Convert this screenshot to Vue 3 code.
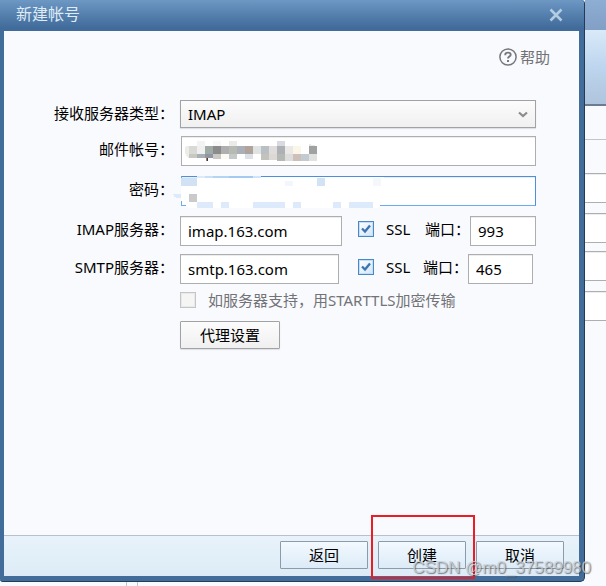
<script setup>
import { ref } from 'vue'

const protocol = ref('IMAP')
const startTls = ref(false)
const servers = ref([
  { id: 'imap', label: 'IMAP服务器：', host: 'imap.163.com', ssl: true, port: '993', compact: false },
  { id: 'smtp', label: 'SMTP服务器：', host: 'smtp.163.com', ssl: true, port: '465', compact: true },
])

// Redaction blocks: x, y, width, height, colour
const cell = 8
const upper = ['#d9dad5', '#f0f0f1', '#a0aba8', '#8c8b8c', '#b0afb0', '#b7bab3', '#abafb7', '#b0a39c', '#dfe3e3', '#b9bfc3', '#dfdcdb', '#adb0b4', '#ece8e6', '#faf6e8', '#ffffff', '#a0a2a2']
const lower = ['#c9c7c2', '#a8b0b3', '#9097a3', '#ccc8c4', '#fbfaf5', '#c4caca', '#ffffff', '#dce1e8', '#ffffff', '#c4c2bd', '#dcd8d5', '#b5b8b5', '#dedddd', '#ccc0b8', '#c4cad2', '#e0e2e0']
const accountBlocks = [
  [17, 5, 8, 5, '#f3f3f3'], [33, 5, 8, 5, '#f8f8f8'], [49, 5, 8, 5, '#ebebea'], [97, 5, 8, 5, '#d8dadf'],
  ...upper.map((c, i) => [9 + i * cell, 10, cell, 8, c]),
  ...lower.map((c, i) => [9 + i * cell, 18, cell, i < 3 ? 4 : i < 9 ? 5 : i < 11 ? 6 : 7, c]),
]
const passwordBlocks = [
  [17, 0, 8, 2, '#dcebfa'], [25, 0, 8, 2, '#c9dff6'], [33, 0, 16, 2, '#b4d4f4'], [49, 0, 24, 2, '#a3caf2'], [73, 0, 8, 2, '#d0e3f8'],
  [1, 2, 16, 8, '#d0e2f4'], [105, 5, 8, 5, '#f3f7fc'], [137, 2, 8, 8, '#d3e3f3'], [193, 2, 8, 8, '#f4f8fc'],
  [9, 18, 8, 8, '#cacaca'],
  [17, 26, 16, 6, '#dceafb'], [41, 26, 8, 6, '#dceafb'], [73, 26, 32, 6, '#dceafb'],
  [113, 26, 8, 6, '#dceafb'], [153, 26, 8, 6, '#dceafb'], [169, 26, 24, 6, '#dceafb'],
]
</script>

<template>
  <div class="desktop">
    <div class="upper">
      <section class="dialog">
        <header class="title">
          <h1>新建帐号</h1>
          <button class="close" type="button" aria-label="关闭">
            <svg width="16" height="14" viewBox="0 0 16 14"><path d="M2.500 1.500 13.500 12.500M13.500 1.500 2.500 12.500" stroke="#b4cce2" stroke-width="2.600" /></svg>
          </button>
        </header>

        <main class="body">
          <a class="help" href="#">
            <svg width="18" height="18" viewBox="0 0 18 18" fill="none" stroke="#77787b">
              <circle cx="9" cy="9" r="8.100" stroke-width="1.500" />
              <path d="M6.300 7.200V6.500Q6.300 4.600 9 4.600T11.700 6.700Q11.700 7.800 10.200 8.600Q9 9.300 9 10.500" stroke-width="1.900" />
              <path d="M9 12v2" stroke-width="2" />
            </svg>
            <span>帮助</span>
          </a>

          <form class="form" @submit.prevent>
            <div class="row gap-s">
              <label for="protocol">接收服务器类型：</label>
              <div class="select">
                <select id="protocol" v-model="protocol">
                  <option>IMAP</option>
                  <option>POP3</option>
                </select>
                <svg width="10" height="7" viewBox="0 0 10 7"><path d="M1 1.500 5 5 9 1.500" fill="none" stroke="#8a8c8a" stroke-width="2.200" /></svg>
              </div>
            </div>

            <div class="row gap-m">
              <label for="account">邮件帐号：</label>
              <div class="field">
                <input id="account" class="box" type="text" />
                <svg class="mask" width="150" height="30" viewBox="0 0 150 30" shape-rendering="crispEdges">
                  <path d="M9 10H7Q5 10 5 13V16Q5 20 9 22Z" fill="#ececea" />
                  <rect v-for="(b, i) in accountBlocks" :key="i" :x="b[0]" :y="b[1]" :width="b[2]" :height="b[3]" :fill="b[4]" />
                  <path d="M26.500 22v3" stroke="#c77320" />
                  <path d="M27.500 22v3" stroke="#17406f" />
                  <path d="M129 10V8l8 2z" fill="#e8e8e8" />
                </svg>
              </div>
            </div>

            <div class="row gap-m">
              <label for="password">密码：</label>
              <div class="field">
                <input id="password" class="box focus" type="password" />
                <svg class="mask" width="206" height="34" viewBox="0 0 206 34" shape-rendering="crispEdges">
                  <path d="M17 1H204V26L197 32H8L5 29H3V26L1 25V2H17Z" fill="#fff" />
                  <rect v-for="(b, i) in passwordBlocks" :key="i" :x="b[0]" :y="b[1]" :width="b[2]" :height="b[3]" :fill="b[4]" />
                  <path d="M-7 18H1V22H-2Q-6 22 -7 18Z" fill="#dceafb" />
                </svg>
              </div>
            </div>

            <div v-for="s in servers" :key="s.id" class="row gap-s">
              <label :for="s.id + '-host'">{{ s.label }}</label>
              <div class="server" :class="{ compact: s.compact }">
                <input :id="s.id + '-host'" v-model="s.host" class="box host" type="text" />
                <input :id="s.id + '-ssl'" v-model="s.ssl" class="check" type="checkbox" />
                <label :for="s.id + '-ssl'">SSL</label>
                <label :for="s.id + '-port'">端口：</label>
                <input :id="s.id + '-port'" v-model="s.port" class="box" type="text" />
              </div>
            </div>

            <div class="extra">
              <div class="tls">
                <input id="tls" v-model="startTls" class="check" type="checkbox" disabled />
                <label for="tls">如服务器支持，用STARTTLS加密传输</label>
              </div>
              <button class="proxy" type="button">代理设置</button>
            </div>
          </form>
        </main>

        <footer class="actions">
          <button type="button">返回</button>
          <div class="marked"><button type="button">创建</button></div>
          <button type="button">取消</button>
        </footer>
        <span class="watermark">CSDN @m0_37589980</span>
      </section>

      <aside class="behind">
        <div class="behind-title"></div>
        <div class="behind-tools"></div>
        <div class="line"></div>
        <div class="slot"></div>
        <div class="slot near"></div>
        <div class="slot"></div>
        <div class="slot"></div>
      </aside>
    </div>
    <div class="below"><i></i></div>
  </div>
</template>

<style>
body { margin: 0; background: #f9fafe; }
</style>

<style scoped>
* { box-sizing: border-box; }
.desktop {
  min-height: 100vh;
  display: flex;
  flex-direction: column;
  background: #f9fafe;
  color: #000;
  font: 15px/20px "Noto Sans", "Noto Sans CJK SC", sans-serif;
}
input, select, button { font: inherit; color: inherit; margin: 0; }
.upper { flex: 1; display: flex; }
.dialog {
  position: relative;
  flex: 1;
  min-width: 0;
  display: flex;
  flex-direction: column;
  background: #426d9a;
  border-right: 1px solid #233b57;
  border-bottom: 1px solid #233b57;
  border-radius: 0 4px 5px 3px;
  padding: 0 5px 5px 4px;
}
.title {
  height: 31px;
  margin: 0 -5px 0 -4px;
  padding: 0 20px 0 16px;
  border-radius: 0 3px 0 0;
  display: flex;
  align-items: center;
  justify-content: space-between;
  background: linear-gradient(#6d98c4, #406b9a 90%);
}
h1 { margin: 0; font-size: 16px; font-weight: 400; line-height: 28px; color: #dfebf6; padding-bottom: 4px; }
.close { display: flex; border: 0; padding: 0 0 2px; background: none; }
.body { flex: 1; background: #f9fafe; padding: 16px 43px 0 0; }
.help {
  display: flex;
  align-items: center;
  justify-content: flex-end;
  gap: 3px;
  height: 20px;
  margin-right: -14px;
  color: #717276;
  text-decoration: none;
}
.form { padding-top: 33px; }
.row { display: grid; grid-template-columns: 170px 1fr; column-gap: 6px; }
.row > label { text-align: right; line-height: 26px; white-space: nowrap; }
.gap-s { margin-bottom: 8px; }
.gap-m { margin-bottom: 10px; }
.select { position: relative; }
.select select {
  display: block;
  width: 100%;
  height: 28px;
  padding: 0 28px 0 7px;
  border: 1px solid #a0a2a3;
  border-radius: 0;
  appearance: none;
  background: linear-gradient(#fcfcfc, #f0f0f0);
  box-shadow: 0 1px 1px #e0e1e4;
}
.select svg { position: absolute; right: 8px; top: 11px; pointer-events: none; }
.field { position: relative; padding-left: 1px; }
.box {
  display: block;
  width: 100%;
  min-width: 0;
  height: 30px;
  padding: 0 7px;
  border: 1px solid #adaeb0;
  border-radius: 0;
  background: #fff;
  box-shadow: inset 0 1px 0 #ededed;
  outline: none;
}
.focus { border-color: #4a90dc #4a90dc #6eabee #6eabee; }
.mask { position: absolute; left: 0; top: 0; overflow: visible; pointer-events: none; }
.server {
  display: grid;
  grid-template-columns: 178px 28px 39px 45px 1fr;
  line-height: 26px;
}
.server label { white-space: nowrap; }
.host { width: 162px; }
.compact { grid-template-columns: 178px 28px 37px 45px 65px; }
.compact .host { width: 159px; }
.check {
  appearance: none;
  width: 16px;
  height: 16px;
  margin: 5px 0 0;
  border: 1px solid #4688c8;
  background: linear-gradient(135deg, #fff, #cfe5f8);
  box-shadow: inset 0 0 0 1px #c8dff3;
}
.check:checked {
  background:
    url("data:image/svg+xml,%3Csvg xmlns='http://www.w3.org/2000/svg' viewBox='0 0 14 14'%3E%3Cpath d='M3 6.500 6 9.500 11 3.500' fill='none' stroke='%233c74ad' stroke-width='2.300'/%3E%3C/svg%3E"),
    linear-gradient(135deg, #fff, #cfe5f8);
}
.check:disabled { margin: 0; border-color: #c4c5c6; background: #f5f5f4; box-shadow: inset 0 0 0 1px #e9e9e9; }
.extra { padding-left: 176px; }
.tls { display: flex; gap: 12px; height: 16px; align-items: center; color: #727376; white-space: nowrap; }
.proxy {
  display: block;
  width: 100px;
  height: 28px;
  margin-top: 13px;
  padding: 0;
  border: 1px solid #a0a2a3;
  border-radius: 1px;
  background: linear-gradient(#fcfcfc, #f0f0f0);
  box-shadow: 0 1px 1px #e0e1e4;
}
.actions {
  display: flex;
  align-items: flex-start;
  justify-content: flex-end;
  gap: 10px;
  height: 41px;
  padding: 5px 15px 0 0;
  border-top: 1px solid #b8c0c9;
  background: linear-gradient(#e9f2fa, #e0eff8 60%, #deebf7);
}
.actions button {
  display: block;
  width: 88px;
  height: 28px;
  padding: 0;
  border: 1px solid #8b9bac;
  border-radius: 1px;
  background: linear-gradient(#f3f9fe, #dcebf8);
}
.marked { position: relative; }
.marked::after {
  content: "";
  position: absolute;
  inset: -26px -9px -10px -7px;
  border: 2px solid #ec1c24;
  pointer-events: none;
}
.watermark {
  position: absolute;
  right: -7px;
  bottom: 3px;
  font: 17px/20px "Liberation Sans", sans-serif;
  color: rgba(205, 210, 215, 0.8);
  text-shadow: 1px 1px 1px rgba(50, 55, 60, 0.6);
  white-space: nowrap;
  pointer-events: none;
}
.behind { width: 21px; }
.behind-title { height: 30px; background: linear-gradient(#8eaed3, #829fc5); }
.behind-tools { height: 76px; background: linear-gradient(#d9eaf9, #bdd5ee 50%, #afc4dd); border-bottom: 2px solid #6b7c93; }
.line { height: 34px; border-bottom: 1px solid #c4c5c8; margin-bottom: 33px; }
.slot { height: 30px; margin-bottom: 10px; background: #fff; border: solid #adaeb0; border-width: 1px 0; box-shadow: inset 0 1px 0 #ededed; }
.slot.near { margin-bottom: 8px; }
.below { height: 4px; padding-left: 126px; }
.below i { display: block; width: 12px; height: 4px; border: solid #c4c5c8; border-width: 0 1px; }
</style>
